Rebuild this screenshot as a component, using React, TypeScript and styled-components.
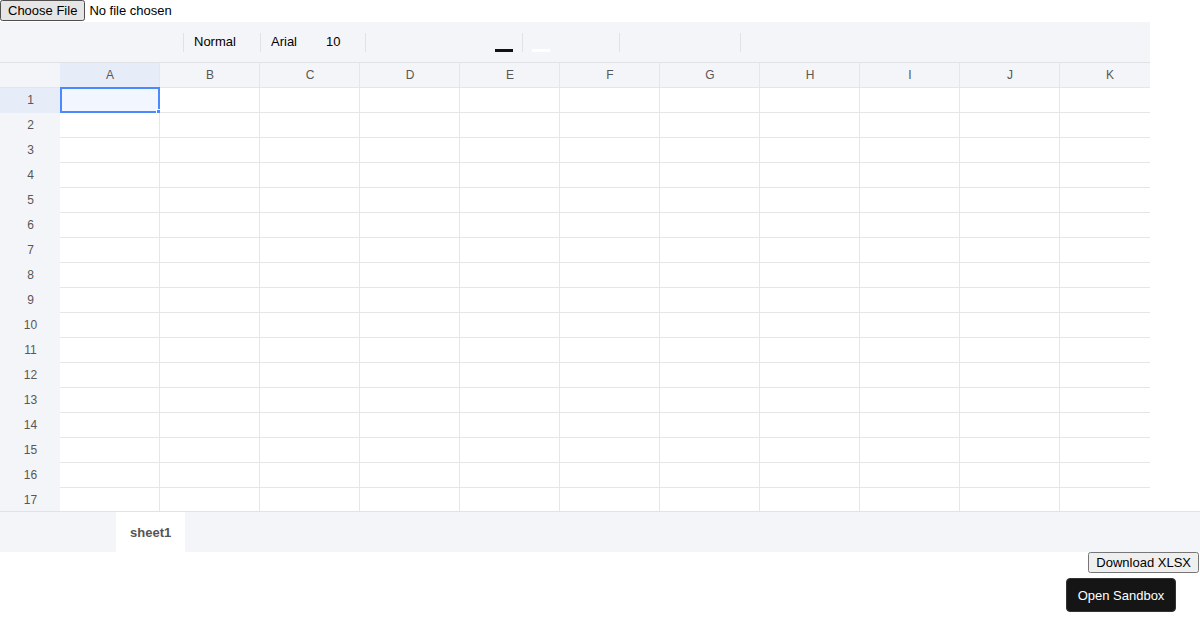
import React from "react";
import styled, { createGlobalStyle } from "styled-components";

const Global = createGlobalStyle`
  html, body { margin: 0; padding: 0; background: #fff; }
  body { font-family: "Liberation Sans", Arial, sans-serif; width: 1200px; overflow: hidden; }
`;

const FileRow = styled.div`
  height: 22px;
  display: flex;
  align-items: flex-start;
  input {
    font-family: "Liberation Sans", Arial, sans-serif;
    font-size: 13px;
    margin: 0;
  }
`;

const Sheet = styled.div`
  width: 1150px;
  position: relative;
`;

const Toolbar = styled.div`
  height: 40px;
  background: #f4f5f8;
  border-bottom: 1px solid #e0e2e4;
  display: flex;
  align-items: center;
`;

const Slot = styled.div<{ $w: number }>`
  width: ${(p) => p.$w}px;
  flex: none;
  height: 19px;
  display: flex;
  align-items: flex-end;
`;

const Divider = styled.div`
  width: 1px;
  height: 19px;
  background: #e0e2e4;
  flex: none;
`;

const Dropdown = styled.div<{ $w: number }>`
  width: ${(p) => p.$w}px;
  flex: none;
  box-sizing: border-box;
  padding: 0 0 2px 10px;
  font-size: 13px;
  color: #000;
  line-height: 19px;
`;

const ColorBar = styled.div<{ $color: string }>`
  width: 18px;
  height: 3px;
  background: ${(p) => p.$color};
`;

const GridWrap = styled.div`
  height: 448px;
  overflow: hidden;
  position: relative;
`;

const Grid = styled.div`
  display: grid;
  grid-template-columns: 60px repeat(11, 100px);
  grid-auto-rows: 25px;
  width: 1160px;
`;

const HeadCell = styled.div<{ $active?: boolean }>`
  box-sizing: border-box;
  background: ${(p) => (p.$active ? "#e7ecf9" : "#f4f5f8")};
  border-right: 1px solid #e6e6e6;
  border-bottom: 1px solid #e6e6e6;
  color: #585757;
  font-size: 12px;
  display: flex;
  align-items: center;
  justify-content: center;
  padding-left: 1px;
`;

const Corner = styled(HeadCell)`
  border-right: none;
`;

const RowHead = styled(HeadCell)`
  border-right: none;
  border-bottom: none;
  padding-bottom: 2px;
`;

const Cell = styled.div<{ $active?: boolean }>`
  box-sizing: border-box;
  border-right: 1px solid #e6e6e6;
  border-bottom: 1px solid #e6e6e6;
  background: ${(p) => (p.$active ? "#f1f6ff" : "#fff")};
  position: relative;
`;

const Selection = styled.div`
  position: absolute;
  left: 0;
  top: -1px;
  right: -1px;
  bottom: -1px;
  border: 2px solid #4b89ff;
  pointer-events: none;
`;

const Handle = styled.div`
  position: absolute;
  right: -5px;
  bottom: -5px;
  width: 5px;
  height: 5px;
  background: #4b89ff;
  border: 1px solid #fff;
`;

const ScrollCorner = styled.div`
  position: absolute;
  right: 0;
  bottom: 0;
  width: 15px;
  height: 14px;
  background: #fff;
`;

const Footer = styled.div`
  height: 40px;
  background: #f4f5f8;
  border-top: 1px solid #e0e2e4;
  display: flex;
  width: 1200px;
`;

const Tab = styled.div`
  margin-left: 116px;
  padding: 0 14px;
  background: #fff;
  font-size: 13px;
  font-weight: bold;
  color: #555;
  display: flex;
  align-items: center;
`;

const Actions = styled.div`
  display: flex;
  flex-direction: column;
  align-items: flex-end;
`;

const NativeButton = styled.button`
  font-family: "Liberation Sans", Arial, sans-serif;
  font-size: 13px;
  margin: 0 1px 0 0;
`;

const SandboxButton = styled.button`
  margin: 5px 24px 0 0;
  width: 110px;
  height: 34px;
  background: #151515;
  color: #fff;
  border: 1px solid #333;
  border-radius: 4px;
  font-family: "Liberation Sans", Arial, sans-serif;
  font-size: 13px;
  padding: 0;
`;

const cols = ["A", "B", "C", "D", "E", "F", "G", "H", "I", "J", "K"];
const rows = Array.from({ length: 17 }, (_, i) => i + 1);

export default function App() {
  return (
    <>
      <Global />
      <FileRow>
        <input type="file" />
      </FileRow>
      <Sheet>
        <Toolbar>
          <Slot $w={183} />
          <Divider />
          <Dropdown $w={76}>Normal</Dropdown>
          <Divider />
          <Dropdown $w={55}>Arial</Dropdown>
          <Dropdown $w={49}>10</Dropdown>
          <Divider />
          <Slot $w={129} />
          <Slot $w={18}>
            <ColorBar $color="#111" />
          </Slot>
          <Slot $w={9} />
          <Divider />
          <Slot $w={9} />
          <Slot $w={18}>
            <ColorBar $color="#fff" />
          </Slot>
          <Slot $w={69} />
          <Divider />
          <Slot $w={120} />
          <Divider />
        </Toolbar>
        <GridWrap>
          <Grid>
            <Corner />
            {cols.map((c) => (
              <HeadCell key={c} $active={c === "A"}>
                {c}
              </HeadCell>
            ))}
            {rows.map((r) => (
              <React.Fragment key={r}>
                <RowHead $active={r === 1}>{r}</RowHead>
                {cols.map((c) => (
                  <Cell key={c} $active={r === 1 && c === "A"}>
                    {r === 1 && c === "A" && (
                      <Selection>
                        <Handle />
                      </Selection>
                    )}
                  </Cell>
                ))}
              </React.Fragment>
            ))}
          </Grid>
          <ScrollCorner />
        </GridWrap>
      </Sheet>
      <Footer>
        <Tab>sheet1</Tab>
      </Footer>
      <Actions>
        <NativeButton>Download XLSX</NativeButton>
        <SandboxButton>Open Sandbox</SandboxButton>
      </Actions>
    </>
  );
}
